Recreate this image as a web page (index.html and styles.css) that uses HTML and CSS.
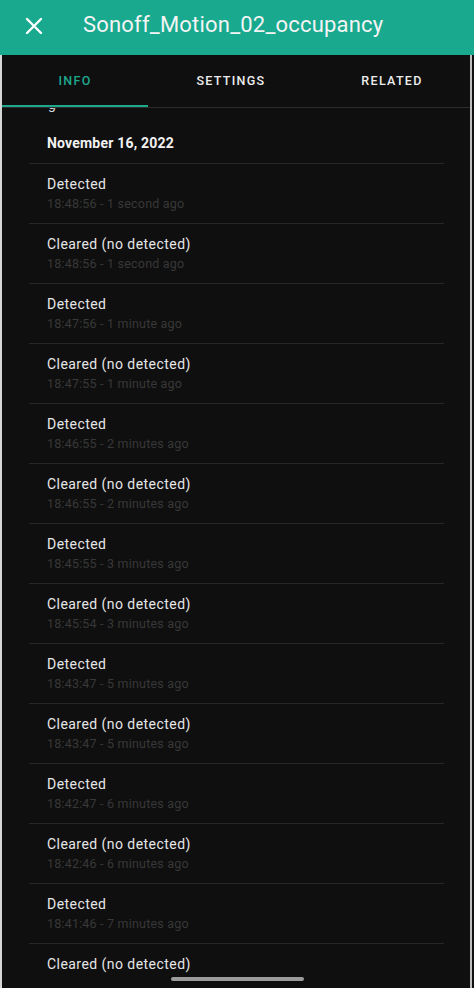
FILE: index.html
```html
<!DOCTYPE html>
<html>
<head>
	<meta charset="utf-8">
	<title>Sonoff_Motion_02_occupancy</title>
	<link rel="stylesheet" href="styles.css">
</head>

<body>

	<header class="top">
		<svg class="close" width="18" height="18" viewBox="0 0 18 18">
			<path d="M2 2 L16 16 M16 2 L2 16" stroke="#fff" stroke-width="2.4" stroke-linecap="round"/>
		</svg>
		<h1 class="title">Sonoff_Motion_02_occupancy</h1>
	</header>

	<div class="page">
		<nav class="tabs">
			<div class="tab tab-info active">Info</div>
			<div class="tab tab-settings">Settings</div>
			<div class="tab tab-related">Related</div>
		</nav>

		<div class="log">
			<div class="cut"><span>g</span></div>
			<div class="day">November 16, 2022</div>

			<div class="entry">
				<div class="state">Detected</div>
				<div class="when">18:48:56 - 1 second ago</div>
			</div>
			<div class="entry">
				<div class="state">Cleared (no detected)</div>
				<div class="when">18:48:56 - 1 second ago</div>
			</div>
			<div class="entry">
				<div class="state">Detected</div>
				<div class="when">18:47:56 - 1 minute ago</div>
			</div>
			<div class="entry">
				<div class="state">Cleared (no detected)</div>
				<div class="when">18:47:55 - 1 minute ago</div>
			</div>
			<div class="entry">
				<div class="state">Detected</div>
				<div class="when">18:46:55 - 2 minutes ago</div>
			</div>
			<div class="entry">
				<div class="state">Cleared (no detected)</div>
				<div class="when">18:46:55 - 2 minutes ago</div>
			</div>
			<div class="entry">
				<div class="state">Detected</div>
				<div class="when">18:45:55 - 3 minutes ago</div>
			</div>
			<div class="entry">
				<div class="state">Cleared (no detected)</div>
				<div class="when">18:45:54 - 3 minutes ago</div>
			</div>
			<div class="entry">
				<div class="state">Detected</div>
				<div class="when">18:43:47 - 5 minutes ago</div>
			</div>
			<div class="entry">
				<div class="state">Cleared (no detected)</div>
				<div class="when">18:43:47 - 5 minutes ago</div>
			</div>
			<div class="entry">
				<div class="state">Detected</div>
				<div class="when">18:42:47 - 6 minutes ago</div>
			</div>
			<div class="entry">
				<div class="state">Cleared (no detected)</div>
				<div class="when">18:42:46 - 6 minutes ago</div>
			</div>
			<div class="entry">
				<div class="state">Detected</div>
				<div class="when">18:41:46 - 7 minutes ago</div>
			</div>
			<div class="entry">
				<div class="state">Cleared (no detected)</div>
			</div>
		</div>
	</div>

	<div class="home-bar"></div>

</body>
</html>
```

FILE: styles.css
```css
* {
	padding: 0;
	margin: 0;
	box-sizing: border-box;
}
html, body {
	height: 988px;
	overflow: hidden;
}
body {
	background-color: #0f0f0f;
	font-family: Roboto, "Liberation Sans", sans-serif;
	color: #e4e4e4;
}
.top {
	height: 55px;
	background-color: #18a98f;
	display: flex;
	align-items: center;
	padding-left: 25px;
	padding-bottom: 7px;
}
.top .close {
	flex: none;
	margin-top: 3px;
}
.top .title {
	font-size: 22px;
	font-weight: 400;
	color: #f4f4f4;
	margin-left: 40px;
	letter-spacing: 0.2px;
}
.page {
	height: 933px;
	border-left: 2px solid #d6d6d6;
	border-right: 2px solid #bdbdbd;
	margin-right: 2px;
	background-color: #0f0f0f;
	overflow: hidden;
}
.tabs {
	display: flex;
	height: 53px;
	border-bottom: 1px solid #2c2c2c;
}
.tab {
	height: 52px;
	display: flex;
	align-items: center;
	justify-content: center;
	padding-top: 1px;
	font-size: 12.5px;
	font-weight: 500;
	letter-spacing: 1.3px;
	text-transform: uppercase;
	color: #ececec;
	border-bottom: 2px solid transparent;
}
.tab-info {
	width: 146px;
}
.tab-settings {
	width: 166px;
}
.tab-related {
	flex: 1;
}
.tab.active {
	color: #1da88c;
	border-bottom-color: #1da88c;
}
.log {
	margin: 0 26px 0 27px;
}
/* bottom of the heading above, scrolled under the tabs */
.cut {
	height: 4px;
	padding-left: 19px;
	overflow: hidden;
	color: #d8d8d8;
}
.cut span {
	display: block;
	font-size: 14px;
	line-height: 14px;
	margin-top: -11px;
}
.day {
	height: 52px;
	padding-left: 18px;
	padding-top: 23px;
	font-size: 14px;
	font-weight: 700;
	letter-spacing: 0.2px;
	color: #f2f2f2;
	border-bottom: 1px solid #262626;
}
.entry {
	height: 60px;
	padding-left: 18px;
	padding-top: 10px;
	border-bottom: 1px solid #262626;
}
.entry .state {
	font-size: 14px;
	line-height: 20px;
	letter-spacing: 0.45px;
	color: #e6e6e6;
}
.entry .when {
	font-size: 12.5px;
	line-height: 20px;
	letter-spacing: 0.2px;
	color: #383838;
}
.home-bar {
	position: fixed;
	left: 171px;
	top: 977px;
	width: 133px;
	height: 4px;
	border-radius: 2px;
	background-color: #9c9c9c;
}
```
